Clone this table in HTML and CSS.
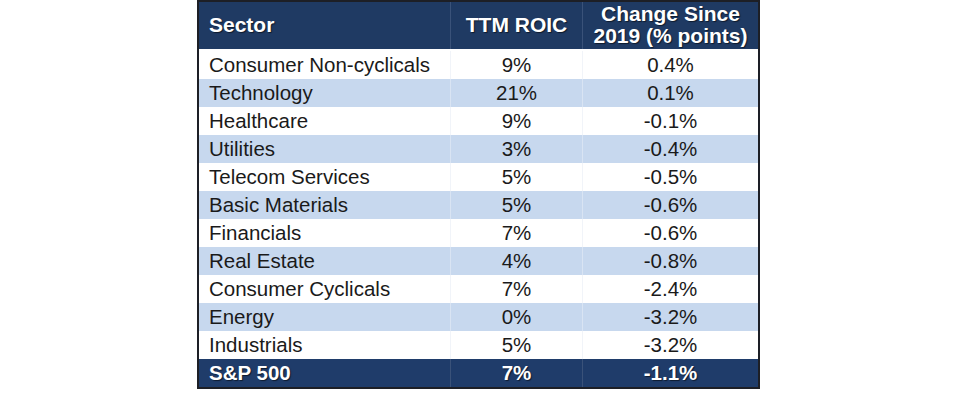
FILE: index.html
```html
<!DOCTYPE html>
<html>
<head>
<meta charset="utf-8">
<link rel="stylesheet" href="styles.css">
</head>
<body>
<div class="table">
  <div class="row head">
    <div class="cell sector">Sector</div>
    <div class="cell num">TTM ROIC</div>
    <div class="cell num two">Change Since<br>2019 (% points)</div>
  </div>
  <div class="gap"></div>
  <div class="row white"><div class="cell sector">Consumer Non-cyclicals</div><div class="cell num">9%</div><div class="cell num">0.4%</div></div>
  <div class="row blue"><div class="cell sector">Technology</div><div class="cell num">21%</div><div class="cell num">0.1%</div></div>
  <div class="row white"><div class="cell sector">Healthcare</div><div class="cell num">9%</div><div class="cell num">-0.1%</div></div>
  <div class="row blue"><div class="cell sector">Utilities</div><div class="cell num">3%</div><div class="cell num">-0.4%</div></div>
  <div class="row white"><div class="cell sector">Telecom Services</div><div class="cell num">5%</div><div class="cell num">-0.5%</div></div>
  <div class="row blue"><div class="cell sector">Basic Materials</div><div class="cell num">5%</div><div class="cell num">-0.6%</div></div>
  <div class="row white"><div class="cell sector">Financials</div><div class="cell num">7%</div><div class="cell num">-0.6%</div></div>
  <div class="row blue"><div class="cell sector">Real Estate</div><div class="cell num">4%</div><div class="cell num">-0.8%</div></div>
  <div class="row white"><div class="cell sector">Consumer Cyclicals</div><div class="cell num">7%</div><div class="cell num">-2.4%</div></div>
  <div class="row blue"><div class="cell sector">Energy</div><div class="cell num">0%</div><div class="cell num">-3.2%</div></div>
  <div class="row white"><div class="cell sector">Industrials</div><div class="cell num">5%</div><div class="cell num">-3.2%</div></div>
  <div class="row total"><div class="cell sector">S&amp;P 500</div><div class="cell num">7%</div><div class="cell num">-1.1%</div></div>
</div>
</body>
</html>
```

FILE: styles.css
```css
html, body {
  margin: 0;
  padding: 0;
  background: #ffffff;
}
body {
  font-family: "Liberation Sans", Arial, sans-serif;
  color: #1a1a1a;
}
.table {
  margin-left: 197px;
  width: 559px;
  border: 2px solid #1d1f26;
  background: #ffffff;
}
.row {
  display: grid;
  grid-template-columns: 251px 132px 176px;
  height: 28px;
}
.cell {
  display: flex;
  align-items: center;
  font-size: 20.5px;
  line-height: 22px;
  white-space: nowrap;
}
.sector {
  padding-left: 10px;
}
.num {
  justify-content: center;
  text-align: center;
}
.head {
  height: 47px;
  background: #1f3a63;
  color: #ffffff;
  font-weight: bold;
}
.head .cell {
  font-size: 21px;
  padding-bottom: 2px;
}
.head .cell, .total .cell {
  font-weight: bold;
  color: #ffffff;
  text-shadow: 1px 1px 1px rgba(0, 0, 0, 0.55);
}
.head .num, .total .num {
  border-left: 1px solid #3a5279;
}
.gap {
  height: 2px;
  background: #ffffff;
}
.white {
  background: #ffffff;
}
.white .num {
  border-left: 1px solid #f1f4f9;
}
.blue {
  background: #c7d8ee;
}
.blue .num {
  border-left: 1px solid #d9e4f3;
}
.total {
  background: #1f3c6a;
}
```
